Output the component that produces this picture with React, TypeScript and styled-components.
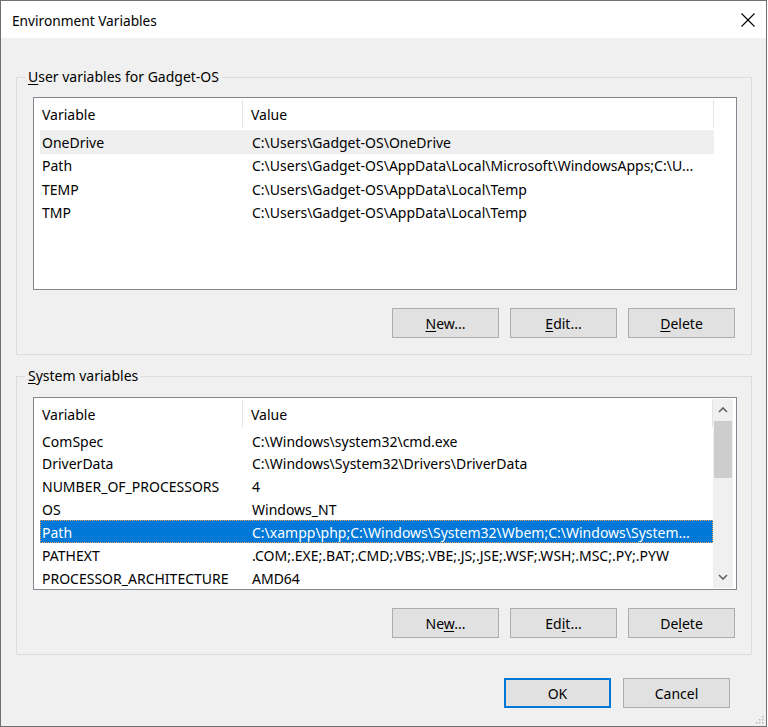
import React from 'react';
import styled, { createGlobalStyle } from 'styled-components';

interface EnvVar {
  name: string;
  value: string;
  state?: 'hover' | 'selected';
}

const userVars: EnvVar[] = [
  { name: 'OneDrive', value: 'C:\\Users\\Gadget-OS\\OneDrive', state: 'hover' },
  { name: 'Path', value: 'C:\\Users\\Gadget-OS\\AppData\\Local\\Microsoft\\WindowsApps;C:\\U...' },
  { name: 'TEMP', value: 'C:\\Users\\Gadget-OS\\AppData\\Local\\Temp' },
  { name: 'TMP', value: 'C:\\Users\\Gadget-OS\\AppData\\Local\\Temp' },
];

const systemVars: EnvVar[] = [
  { name: 'ComSpec', value: 'C:\\Windows\\system32\\cmd.exe' },
  { name: 'DriverData', value: 'C:\\Windows\\System32\\Drivers\\DriverData' },
  { name: 'NUMBER_OF_PROCESSORS', value: '4' },
  { name: 'OS', value: 'Windows_NT' },
  { name: 'Path', value: 'C:\\xampp\\php;C:\\Windows\\System32\\Wbem;C:\\Windows\\System...', state: 'selected' },
  { name: 'PATHEXT', value: '.COM;.EXE;.BAT;.CMD;.VBS;.VBE;.JS;.JSE;.WSF;.WSH;.MSC;.PY;.PYW' },
  { name: 'PROCESSOR_ARCHITECTURE', value: 'AMD64' },
];

const CloseIcon = () => (
  <svg width="14" height="14" viewBox="0 0 14 14">
    <path d="M0.5 0.5 L13.5 13.5 M13.5 0.5 L0.5 13.5" stroke="#000" strokeWidth="1.1" fill="none" />
  </svg>
);

const Chevron = ({ up }: { up?: boolean }) => (
  <svg width="10" height="6" viewBox="0 0 10 6">
    <path
      d={up ? 'M1 5 L5 1 L9 5' : 'M1 1 L5 5 L9 1'}
      stroke="#606060"
      strokeWidth="1.6"
      fill="none"
    />
  </svg>
);

const Grip = () => (
  <svg width="10" height="10" viewBox="0 0 10 10">
    {[
      [8, 2],
      [5, 5],
      [8, 5],
      [2, 8],
      [5, 8],
      [8, 8],
    ].map(([x, y]) => (
      <rect key={`${x}-${y}`} x={x} y={y} width="1.5" height="1.5" fill="#b8b8b8" />
    ))}
  </svg>
);

const VarList = ({ vars, scroll }: { vars: EnvVar[]; scroll?: boolean }) => (
  <ListView>
    <Table>
      <HeaderRow>
        <HeaderCell>Variable</HeaderCell>
        <HeaderCell $value>Value</HeaderCell>
      </HeaderRow>
      {vars.map((v) => (
        <Row key={v.name + v.value} $state={v.state}>
          <Cell>{v.name}</Cell>
          <Cell $value>{v.value}</Cell>
        </Row>
      ))}
    </Table>
    {scroll && (
      <ScrollBar>
        <ScrollArrow>
          <Chevron up />
        </ScrollArrow>
        <Thumb />
        <ScrollSpacer />
        <ScrollArrow>
          <Chevron />
        </ScrollArrow>
      </ScrollBar>
    )}
  </ListView>
);

const App = () => {
  return (
    <>
      <GlobalStyle />
      <Window>
        <TitleBar>
          <Title>Environment Variables</Title>
          <CloseButton>
            <CloseIcon />
          </CloseButton>
        </TitleBar>
        <Body>
          <GroupBox>
            <Legend>
              <Mnemonic>U</Mnemonic>ser variables for Gadget-OS
            </Legend>
            <VarList vars={userVars} />
            <ButtonRow>
              <Button>
                <Mnemonic>N</Mnemonic>ew...
              </Button>
              <Button>
                <Mnemonic>E</Mnemonic>dit...
              </Button>
              <Button>
                <Mnemonic>D</Mnemonic>elete
              </Button>
            </ButtonRow>
          </GroupBox>
          <GroupBox $second>
            <Legend>
              <Mnemonic>S</Mnemonic>ystem variables
            </Legend>
            <VarList vars={systemVars} scroll />
            <ButtonRow>
              <Button>
                Ne<Mnemonic>w</Mnemonic>...
              </Button>
              <Button>
                Ed<Mnemonic>i</Mnemonic>t...
              </Button>
              <Button>
                De<Mnemonic>l</Mnemonic>ete
              </Button>
            </ButtonRow>
          </GroupBox>
          <Footer>
            <Button $primary>OK</Button>
            <Button>Cancel</Button>
          </Footer>
        </Body>
        <GripCorner>
          <Grip />
        </GripCorner>
      </Window>
    </>
  );
};

const GlobalStyle = createGlobalStyle`
  body {
    margin: 0;
    background: #ffffff;
  }
  * {
    box-sizing: border-box;
  }
`;

const Window = styled.div`
  position: relative;
  width: 767px;
  height: 727px;
  border: 1px solid #6f6f6f;
  background: #f0f0f0;
  display: flex;
  flex-direction: column;
  font-family: 'Segoe UI', 'Noto Sans', sans-serif;
  font-size: 14px;
  color: #000;
`;

const TitleBar = styled.div`
  height: 37px;
  background: #ffffff;
  display: flex;
  align-items: center;
  justify-content: space-between;
  padding-left: 11px;
`;

const Title = styled.div`
  font-size: 13.7px;
  padding-top: 1px;
`;

const CloseButton = styled.div`
  width: 36px;
  height: 37px;
  display: flex;
  align-items: center;
  justify-content: center;
`;

const Body = styled.div`
  display: flex;
  flex-direction: column;
  padding: 29px 14px 0 15px;
`;

const GroupBox = styled.fieldset<{ $second?: boolean }>`
  margin: ${(p) => (p.$second ? '11px' : '0')} 0 0 0;
  padding: ${(p) => (p.$second ? '11px' : '10px')} 14px 16px 16px;
  min-width: 0;
  border: 1px solid #dcdcdc;
  display: flex;
  flex-direction: column;
`;

const Legend = styled.legend`
  margin-left: -8px;
  padding: 0 3px;
  line-height: 20px;
`;

const Mnemonic = styled.span`
  text-decoration: underline;
  text-underline-offset: 2px;
`;

const ListView = styled.div`
  height: 193px;
  border: 1px solid #828790;
  background: #ffffff;
  display: flex;
  overflow: hidden;
`;

const Table = styled.div`
  width: 680px;
  padding-left: 6px;
  display: flex;
  flex-direction: column;
`;

const HeaderRow = styled.div`
  height: 32px;
  display: grid;
  grid-template-columns: 203px 1fr;
  align-items: stretch;
`;

const HeaderCell = styled.div<{ $value?: boolean }>`
  display: flex;
  align-items: center;
  padding-left: ${(p) => (p.$value ? '8px' : '2px')};
  padding-top: 1px;
  border-right: 1px solid #e5e5e5;
  margin: 2px 0 2px;
`;

const Row = styled.div<{ $state?: 'hover' | 'selected' }>`
  height: 23.5px;
  display: grid;
  grid-template-columns: 203px 1fr;
  align-items: center;
  background: ${(p) =>
    p.$state === 'selected' ? '#0078d7' : p.$state === 'hover' ? '#efefef' : 'transparent'};
  color: ${(p) => (p.$state === 'selected' ? '#ffffff' : '#000000')};
  outline: ${(p) => (p.$state === 'selected' ? '1px dotted #e0a060' : 'none')};
  outline-offset: -1px;
`;

const Cell = styled.div<{ $value?: boolean }>`
  padding-left: ${(p) => (p.$value ? '9px' : '2px')};
  padding-top: 1px;
  white-space: nowrap;
  overflow: hidden;
`;

const ScrollBar = styled.div`
  width: 20px;
  margin: 1px 3px 1px 0;
  background: #f0f0f0;
  display: flex;
  flex-direction: column;
`;

const ScrollArrow = styled.div`
  height: 22px;
  display: flex;
  align-items: center;
  justify-content: center;
`;

const Thumb = styled.div`
  height: 57px;
  background: #cdcdcd;
  margin: 0 1px;
`;

const ScrollSpacer = styled.div`
  flex: 1;
`;

const ButtonRow = styled.div`
  margin-top: 18px;
  margin-right: 2px;
  display: flex;
  justify-content: flex-end;
  gap: 11px;
`;

const Button = styled.button<{ $primary?: boolean }>`
  width: 107px;
  height: 30px;
  padding: 0;
  background: #e1e1e1;
  border: ${(p) => (p.$primary ? '2px solid #0078d7' : '1px solid #adadad')};
  font-family: inherit;
  font-size: 14px;
  color: #000;
`;

const Footer = styled.div`
  margin-top: 23px;
  margin-right: 22px;
  display: flex;
  justify-content: flex-end;
  gap: 12px;
`;

const GripCorner = styled.div`
  position: absolute;
  right: 2px;
  bottom: 2px;
  line-height: 0;
`;

export default App;
